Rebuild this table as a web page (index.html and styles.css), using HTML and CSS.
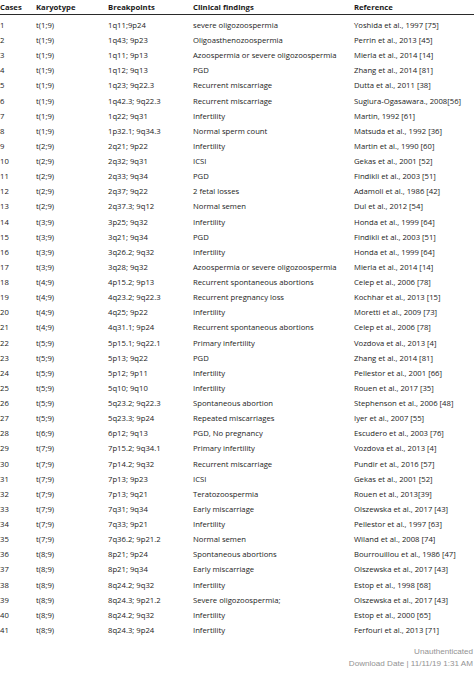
FILE: index.html
```html
<!DOCTYPE html>
<html>
<head>
<meta charset="utf-8">
<link rel="stylesheet" href="styles.css">
</head>
<body>
<div class="page">
  <div class="table">
    <div class="row head">
      <div class="c1">Cases</div><div class="c2">Karyotype</div><div class="c3">Breakpoints</div><div class="c4">Clinical findings</div><div class="c5">Reference</div>
    </div>
    <div class="body">
      <div class="row"><div class="c1">1</div><div class="c2">t(1;9)</div><div class="c3">1q11;9p24</div><div class="c4">severe oligozoospermia</div><div class="c5">Yoshida et al., 1997 [75]</div></div>
      <div class="row"><div class="c1">2</div><div class="c2">t(1;9)</div><div class="c3">1q43; 9p23</div><div class="c4">Oligoasthenozoospermia</div><div class="c5">Perrin et al., 2013 [45]</div></div>
      <div class="row"><div class="c1">3</div><div class="c2">t(1;9)</div><div class="c3">1q11; 9p13</div><div class="c4">Azoospermia or severe oligozoospermia</div><div class="c5">Mierla et al., 2014 [14]</div></div>
      <div class="row"><div class="c1">4</div><div class="c2">t(1;9)</div><div class="c3">1q12; 9q13</div><div class="c4">PGD</div><div class="c5">Zhang et al., 2014 [81]</div></div>
      <div class="row"><div class="c1">5</div><div class="c2">t(1;9)</div><div class="c3">1q23; 9q22.3</div><div class="c4">Recurrent miscarriage</div><div class="c5">Dutta et al., 2011 [38]</div></div>
      <div class="row"><div class="c1">6</div><div class="c2">t(1;9)</div><div class="c3">1q42.3; 9q22.3</div><div class="c4">Recurrent miscarriage</div><div class="c5">Sugiura-Ogasawara., 2008[56]</div></div>
      <div class="row"><div class="c1">7</div><div class="c2">t(1;9)</div><div class="c3">1q22; 9q31</div><div class="c4">Infertility</div><div class="c5">Martin, 1992 [61]</div></div>
      <div class="row"><div class="c1">8</div><div class="c2">t(1;9)</div><div class="c3">1p32.1; 9q34.3</div><div class="c4">Normal sperm count</div><div class="c5">Matsuda et al., 1992 [36]</div></div>
      <div class="row"><div class="c1">9</div><div class="c2">t(2;9)</div><div class="c3">2q21; 9p22</div><div class="c4">Infertility</div><div class="c5">Martin et al., 1990 [60]</div></div>
      <div class="row"><div class="c1">10</div><div class="c2">t(2;9)</div><div class="c3">2q32; 9q31</div><div class="c4">ICSI</div><div class="c5">Gekas et al., 2001 [52]</div></div>
      <div class="row"><div class="c1">11</div><div class="c2">t(2;9)</div><div class="c3">2q33; 9q34</div><div class="c4">PGD</div><div class="c5">Findikli et al., 2003 [51]</div></div>
      <div class="row"><div class="c1">12</div><div class="c2">t(2;9)</div><div class="c3">2q37; 9q22</div><div class="c4">2 fetal losses</div><div class="c5">Adamoli et al., 1986 [42]</div></div>
      <div class="row"><div class="c1">13</div><div class="c2">t(2;9)</div><div class="c3">2q37.3; 9q12</div><div class="c4">Normal semen</div><div class="c5">Dul et al., 2012 [54]</div></div>
      <div class="row"><div class="c1">14</div><div class="c2">t(3;9)</div><div class="c3">3p25; 9q32</div><div class="c4">Infertility</div><div class="c5">Honda et al., 1999 [64]</div></div>
      <div class="row"><div class="c1">15</div><div class="c2">t(3;9)</div><div class="c3">3q21; 9q34</div><div class="c4">PGD</div><div class="c5">Findikli et al., 2003 [51]</div></div>
      <div class="row"><div class="c1">16</div><div class="c2">t(3;9)</div><div class="c3">3q26.2; 9q32</div><div class="c4">Infertility</div><div class="c5">Honda et al., 1999 [64]</div></div>
      <div class="row"><div class="c1">17</div><div class="c2">t(3;9)</div><div class="c3">3q28; 9q32</div><div class="c4">Azoospermia or severe oligozoospermia</div><div class="c5">Mierla et al., 2014 [14]</div></div>
      <div class="row"><div class="c1">18</div><div class="c2">t(4;9)</div><div class="c3">4p15.2; 9p13</div><div class="c4">Recurrent spontaneous abortions</div><div class="c5">Celep et al., 2006 [78]</div></div>
      <div class="row"><div class="c1">19</div><div class="c2">t(4;9)</div><div class="c3">4q23.2; 9q22.3</div><div class="c4">Recurrent pregnancy loss</div><div class="c5">Kochhar et al., 2013 [15]</div></div>
      <div class="row"><div class="c1">20</div><div class="c2">t(4;9)</div><div class="c3">4q25; 9p22</div><div class="c4">Infertility</div><div class="c5">Moretti et al., 2009 [73]</div></div>
      <div class="row"><div class="c1">21</div><div class="c2">t(4;9)</div><div class="c3">4q31.1; 9p24</div><div class="c4">Recurrent spontaneous abortions</div><div class="c5">Celep et al., 2006 [78]</div></div>
      <div class="row"><div class="c1">22</div><div class="c2">t(5;9)</div><div class="c3">5p15.1; 9q22.1</div><div class="c4">Primary infertility</div><div class="c5">Vozdova et al., 2013 [4]</div></div>
      <div class="row"><div class="c1">23</div><div class="c2">t(5;9)</div><div class="c3">5p13; 9q22</div><div class="c4">PGD</div><div class="c5">Zhang et al., 2014 [81]</div></div>
      <div class="row"><div class="c1">24</div><div class="c2">t(5;9)</div><div class="c3">5p12; 9p11</div><div class="c4">Infertility</div><div class="c5">Pellestor et al., 2001 [66]</div></div>
      <div class="row"><div class="c1">25</div><div class="c2">t(5;9)</div><div class="c3">5q10; 9q10</div><div class="c4">Infertility</div><div class="c5">Rouen et al., 2017 [35]</div></div>
      <div class="row"><div class="c1">26</div><div class="c2">t(5;9)</div><div class="c3">5q23.2; 9q22.3</div><div class="c4">Spontaneous abortion</div><div class="c5">Stephenson et al., 2006 [48]</div></div>
      <div class="row"><div class="c1">27</div><div class="c2">t(5;9)</div><div class="c3">5q23.3; 9p24</div><div class="c4">Repeated miscarriages</div><div class="c5">Iyer et al., 2007 [55]</div></div>
      <div class="row"><div class="c1">28</div><div class="c2">t(6;9)</div><div class="c3">6p12; 9q13</div><div class="c4">PGD, No pregnancy</div><div class="c5">Escudero et al., 2003 [76]</div></div>
      <div class="row"><div class="c1">29</div><div class="c2">t(7;9)</div><div class="c3">7p15.2; 9q34.1</div><div class="c4">Primary infertility</div><div class="c5">Vozdova et al., 2013 [4]</div></div>
      <div class="row"><div class="c1">30</div><div class="c2">t(7;9)</div><div class="c3">7p14.2; 9q32</div><div class="c4">Recurrent miscarriage</div><div class="c5">Pundir et al., 2016 [57]</div></div>
      <div class="row"><div class="c1">31</div><div class="c2">t(7;9)</div><div class="c3">7p13; 9p23</div><div class="c4">ICSI</div><div class="c5">Gekas et al., 2001 [52]</div></div>
      <div class="row"><div class="c1">32</div><div class="c2">t(7;9)</div><div class="c3">7p13; 9q21</div><div class="c4">Teratozoospermia</div><div class="c5">Rouen et al., 2013[39]</div></div>
      <div class="row"><div class="c1">33</div><div class="c2">t(7;9)</div><div class="c3">7q31; 9q34</div><div class="c4">Early miscarriage</div><div class="c5">Olszewska et al., 2017 [43]</div></div>
      <div class="row"><div class="c1">34</div><div class="c2">t(7;9)</div><div class="c3">7q33; 9p21</div><div class="c4">Infertility</div><div class="c5">Pellestor et al., 1997 [63]</div></div>
      <div class="row"><div class="c1">35</div><div class="c2">t(7;9)</div><div class="c3">7q36.2; 9p21.2</div><div class="c4">Normal semen</div><div class="c5">Wiland et al., 2008 [74]</div></div>
      <div class="row"><div class="c1">36</div><div class="c2">t(8;9)</div><div class="c3">8p21; 9p24</div><div class="c4">Spontaneous abortions</div><div class="c5">Bourrouillou et al., 1986 [47]</div></div>
      <div class="row"><div class="c1">37</div><div class="c2">t(8;9)</div><div class="c3">8p21; 9q34</div><div class="c4">Early miscarriage</div><div class="c5">Olszewska et al., 2017 [43]</div></div>
      <div class="row"><div class="c1">38</div><div class="c2">t(8;9)</div><div class="c3">8q24.2; 9q32</div><div class="c4">Infertility</div><div class="c5">Estop et al., 1998 [68]</div></div>
      <div class="row"><div class="c1">39</div><div class="c2">t(8;9)</div><div class="c3">8q24.3; 9p21.2</div><div class="c4">Severe oligozoospermia;</div><div class="c5">Olszewska et al., 2017 [43]</div></div>
      <div class="row"><div class="c1">40</div><div class="c2">t(8;9)</div><div class="c3">8q24.2; 9q32</div><div class="c4">Infertility</div><div class="c5">Estop et al., 2000 [65]</div></div>
      <div class="row"><div class="c1">41</div><div class="c2">t(8;9)</div><div class="c3">8q24.3; 9p24</div><div class="c4">Infertility</div><div class="c5">Ferfouri et al., 2013 [71]</div></div>
    </div>
  </div>
  <div class="footer">
    <div>Unauthenticated</div>
    <div>Download Date | 11/11/19 1:31 AM</div>
  </div>
</div>
</body>
</html>
```

FILE: styles.css
```css
html, body {
  margin: 0;
  padding: 0;
  background: #ffffff;
}

.page {
  width: 474px;
  height: 680px;
  overflow: hidden;
  font-family: "Open Sans", "Noto Sans", sans-serif;
  color: #1c1c1c;
}

.row {
  display: grid;
  grid-template-columns: 36px 72px 85px 161px 1fr;
  height: 15.125px;
  align-items: center;
  font-size: 7.7px;
  font-weight: 500;
  white-space: nowrap;
}

.head {
  height: 14px;
  font-weight: 700;
  color: #1a1a1a;
  border-bottom: 1.2px solid #2a2a2a;
}

.body {
  padding-top: 2.4px;
}

.footer {
  margin-top: 8px;
  text-align: right;
  padding-right: 1px;
  font-family: "Liberation Sans", Arial, sans-serif;
  font-size: 8.1px;
  line-height: 12px;
  color: #939393;
}
```
